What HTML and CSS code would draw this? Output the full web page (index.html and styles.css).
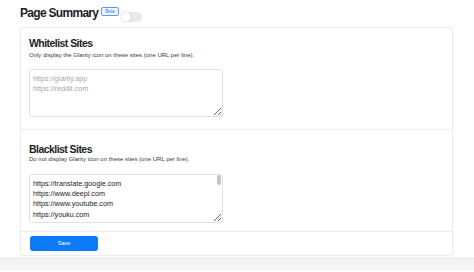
FILE: index.html
```html
<!DOCTYPE html>
<html lang="en">
<head>
<meta charset="utf-8">
<title>Page Summary</title>
<link rel="stylesheet" href="styles.css">
</head>
<body>
<div class="page">
  <div class="header">
    <h1 class="title">Page Summary</h1>
    <span class="badge">Beta</span>
    <span class="toggle"><span class="knob"></span></span>
  </div>
  <div class="card">
    <section class="section section-first">
      <h2 class="heading">Whitelist Sites</h2>
      <p class="desc">Only display the Glarity icon on these sites (one URL per line).</p>
      <textarea class="urls" placeholder="https://glarity.app&#10;https://reddit.com"></textarea>
    </section>
    <section class="section section-second">
      <h2 class="heading">Blacklist Sites</h2>
      <p class="desc">Do not display Glarity icon on these sites (one URL per line).</p>
      <div class="field">
        <textarea class="urls urls-filled">https://translate.google.com
https://www.deepl.com
https://www.youtube.com
https://youku.com
https://www.bilibili.com
https://www.iqiyi.com
https://v.qq.com</textarea>
        <span class="thumb"></span>
      </div>
    </section>
    <div class="footer">
      <button class="save" type="button">Save</button>
    </div>
  </div>
</div>
<div class="bottom-band"></div>
</body>
</html>
```

FILE: styles.css
```css
html, body {
  margin: 0;
  padding: 0;
  background: #ffffff;
  font-family: "Liberation Sans", Arial, sans-serif;
  color: #1d1d1f;
  overflow: hidden;
}

.page {
  padding: 0 21px 0 20px;
}

.header {
  display: flex;
  align-items: flex-start;
  height: 27px;
  padding-top: 6px;
  box-sizing: border-box;
}

.title {
  margin: 0;
  font-size: 12px;
  line-height: 14px;
  font-weight: 700;
  letter-spacing: -0.7px;
  color: #1d1d1f;
}

.badge {
  margin-left: 3px;
  margin-top: 1px;
  height: 9px;
  box-sizing: border-box;
  padding: 0 3px;
  border: 1px solid #5b9cf0;
  border-radius: 2px;
  background: #eef5ff;
  color: #2f7ae5;
  font-size: 4.5px;
  line-height: 7px;
}

.toggle {
  position: relative;
  display: block;
  margin-left: 2px;
  margin-top: 6px;
  width: 21px;
  height: 10px;
  border-radius: 5px;
  background: #e9e9eb;
}

.knob {
  position: absolute;
  left: 0;
  top: 0;
  width: 10px;
  height: 10px;
  border-radius: 50%;
  background: #ffffff;
  box-shadow: 0 0 1.5px rgba(0, 0, 0, 0.3);
}

.card {
  border: 1px solid #ececec;
  border-radius: 3px;
  background: #ffffff;
  box-shadow: 0 0 2px rgba(0, 0, 0, 0.04);
}

.section {
  display: flex;
  flex-direction: column;
  align-items: flex-start;
  padding: 0 8px;
  border-bottom: 1px solid #ececec;
}

.section-first {
  padding-top: 9px;
  padding-bottom: 12px;
}

.section-second {
  padding-top: 13px;
  padding-bottom: 8px;
}

.heading {
  margin: 0;
  font-size: 10.5px;
  line-height: 12px;
  font-weight: 700;
  letter-spacing: -0.55px;
  color: #1d1d1f;
}

.desc {
  margin: 2px 0 0;
  font-size: 6px;
  line-height: 8px;
  color: #3a3a3c;
}

.section-second .desc {
  margin-top: 0;
}

.urls {
  display: block;
  margin-top: 10px;
  width: 194px;
  height: 48px;
  box-sizing: border-box;
  padding: 4px 3px;
  border: 1px solid #e1e1e1;
  border-radius: 3px;
  font-family: "Liberation Sans", Arial, sans-serif;
  font-size: 7.2px;
  line-height: 10.2px;
  color: #222222;
  background: #ffffff;
  outline: none;
  resize: vertical;
}

.urls::placeholder {
  color: #a6a6a6;
}

.field {
  position: relative;
  margin-top: 11px;
}

.urls-filled {
  margin-top: 0;
  height: 49px;
  overflow-y: hidden;
}

.thumb {
  position: absolute;
  right: 2px;
  top: 1px;
  width: 4px;
  height: 10px;
  border-radius: 2px;
  background: #c4c4c4;
}

.footer {
  padding: 4px 9px 4px;
}

.save {
  display: block;
  width: 68px;
  height: 15px;
  padding: 0;
  border: none;
  border-radius: 3px;
  background: #0b7bf7;
  color: #ffffff;
  font-family: "Liberation Sans", Arial, sans-serif;
  font-size: 5.5px;
  line-height: 15px;
}

.bottom-band {
  margin-top: 1px;
  height: 14px;
  background: linear-gradient(to bottom, #efefef, #f7f7f7);
}
```
